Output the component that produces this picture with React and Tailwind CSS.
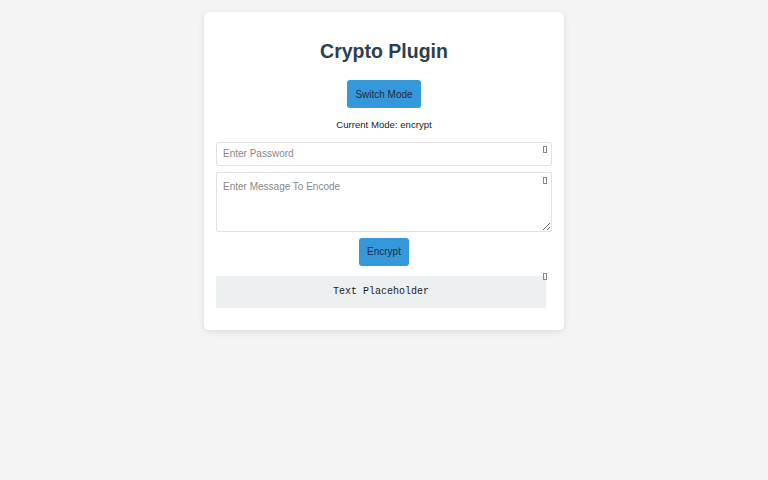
import React from 'react'

function Tofu({ className = '' }) {
  return <span className={`absolute w-[4px] h-[7px] border border-[#888] ${className}`} />
}

export default function App() {
  return (
    <div className="min-h-[480px] bg-[#f4f4f4] flex justify-center pt-[12px] font-['Liberation_Sans',Arial,sans-serif]">
      <div className="w-[360px] h-[318px] bg-white rounded-[5px] shadow-[0_2px_6px_rgba(0,0,0,0.1)] px-[12px] pt-[28px] flex flex-col items-center">
        <h1 className="text-[19.5px] font-bold text-[#2c3e50] leading-[22px]">Crypto Plugin</h1>
        <button className="mt-[18px] w-[74px] h-[28px] bg-[#3498db] rounded-[3px] text-[10px] text-[#1f2d3d]">
          Switch Mode
        </button>
        <p className="mt-[11px] text-[9.6px] text-[#222] leading-[12px]">Current Mode: encrypt</p>
        <div className="relative mt-[9px] w-full">
          <input
            type="password"
            placeholder="Enter Password"
            className="w-full h-[24px] border border-[#e2e2e2] rounded-[2px] px-[6px] text-[10px] placeholder:text-[#888] outline-none"
          />
          <Tofu className="right-[5px] top-[6px]" />
        </div>
        <div className="relative mt-[6px] w-full">
          <textarea
            placeholder="Enter Message To Encode"
            className="block w-full h-[60px] border border-[#e2e2e2] rounded-[2px] px-[6px] pt-[6px] pb-[7px] text-[10px] placeholder:text-[#888] outline-none"
          />
          <Tofu className="right-[5px] top-[5px]" />
        </div>
        <button className="mt-[6px] w-[50px] h-[28px] bg-[#3498db] rounded-[3px] text-[10px] text-[#1f2d3d]">
          Encrypt
        </button>
        <div className="relative mt-[10px] w-full">
          <div className="w-[330px] h-[32px] bg-[#ecf0f1] rounded-[2px] flex items-center justify-center font-['Liberation_Mono',monospace] text-[10px] text-[#222]">
            Text Placeholder
          </div>
          <Tofu className="right-[5px] top-[-3px]" />
        </div>
      </div>
    </div>
  )
}
